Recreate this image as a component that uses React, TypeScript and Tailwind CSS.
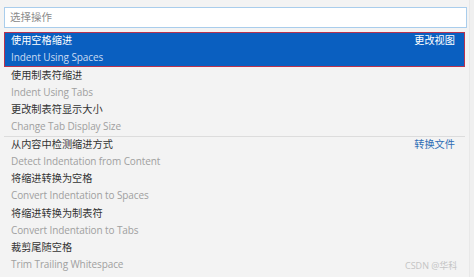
import React from "react";

type Item = { label: string; detail: string; right?: string; sep?: boolean; selected?: boolean };

const items: Item[] = [
  { label: "使用空格缩进", detail: "Indent Using Spaces", right: "更改视图", selected: true },
  { label: "使用制表符缩进", detail: "Indent Using Tabs" },
  { label: "更改制表符显示大小", detail: "Change Tab Display Size" },
  { label: "从内容中检测缩进方式", detail: "Detect Indentation from Content", right: "转换文件", sep: true },
  { label: "将缩进转换为空格", detail: "Convert Indentation to Spaces" },
  { label: "将缩进转换为制表符", detail: "Convert Indentation to Tabs" },
  { label: "裁剪尾随空格", detail: "Trim Trailing Whitespace" },
];

const cjk = "font-['Open_Sans','Noto_Sans_CJK_SC',sans-serif]";

export default function App() {
  return (
    <div className={`relative w-[474px] h-[277px] overflow-hidden bg-[#f3f3f3] flex ${cjk}`}>
      <div className="w-[469px] flex flex-col pt-[7px]">
        <div className="mx-[4px] w-[463px] h-[21px] bg-white border border-[#a9cdec] flex items-center pl-[5px]">
          <span className="text-[10.5px] text-[#8a8a8a] leading-none">选择操作</span>
        </div>
        <div className="mt-[4px] flex flex-col">
          {items.map((it, i) => (
            <div
              key={i}
              className={`mx-[4px] h-[34.5px] flex flex-col justify-center ${
                it.selected ? "bg-[#0a5fc0] border border-[#b8334f] px-[6px]" : "px-[7px]"
              } ${it.sep ? "border-t border-[#dcdcdc] -mx-0" : ""}`}
            >
              <div className="flex items-center justify-between h-[17px]">
                <span className={`text-[10.2px] leading-[17px] ${it.selected ? "text-white" : "text-[#333333]"}`}>
                  {it.label}
                </span>
                {it.right && (
                  <span className={`text-[10.2px] leading-[17px] pr-[3px] ${it.selected ? "text-white" : "text-[#2f6db5]"}`}>
                    {it.right}
                  </span>
                )}
              </div>
              <div className="h-[17px] flex items-center">
                <span
                  className={`text-[10px] leading-[17px] tracking-[-0.1px] ${
                    it.selected ? "text-[#c9dbf2]" : "text-[#a0a0a0]"
                  }`}
                >
                  {it.detail}
                </span>
              </div>
            </div>
          ))}
        </div>
      </div>
      <div className="w-[5px] bg-[#f0f0f0] border-l border-[#e8e8e8]" />
      <span className="absolute left-[405px] top-[261px] text-[9px] leading-none text-[#c4c4c4]">CSDN @华科</span>
    </div>
  );
}
